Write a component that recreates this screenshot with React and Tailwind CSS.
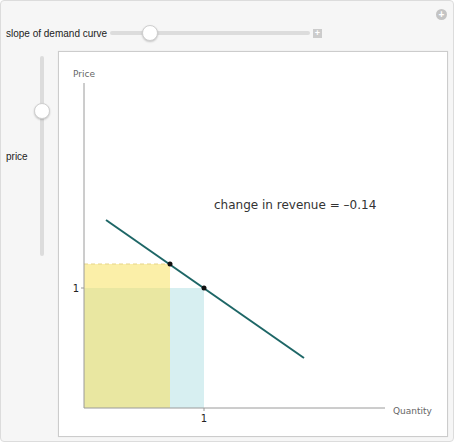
import React from 'react';

// demand-curve revenue demo: two sliders + a plot
const plot = {
  yAxisX: 25,
  axisY: 356,
  oldQ: 145,
  oldP: 236,
  newQ: 111,
  newP: 212,
};

function HSlider() {
  return (
    <div className="relative w-[200px] h-[16px] shrink-0 flex items-center">
      <div className="w-full h-[4px] rounded-full bg-[#dcdcdc]" />
      <div className="absolute left-[32px] top-0 w-[16px] h-[16px] rounded-full bg-white border border-[#cfcfcf] shadow-[0_1px_2px_rgba(0,0,0,0.2)]" />
    </div>
  );
}

function VSlider() {
  return (
    <div className="relative w-[16px] h-[200px] flex justify-center">
      <div className="w-[4px] h-full rounded-full bg-[#dcdcdc]" />
      <div className="absolute top-[47px] left-0 w-[16px] h-[16px] rounded-full bg-white border border-[#cfcfcf] shadow-[0_1px_2px_rgba(0,0,0,0.2)]" />
    </div>
  );
}

function Plot() {
  const { yAxisX, axisY, oldQ, oldP, newQ, newP } = plot;
  return (
    <svg width="388" height="384" viewBox="0 0 388 384" className="block">
      <rect x={yAxisX} y={newP} width={newQ - yAxisX} height={axisY - newP} fill="#fbefa8" />
      <rect x={yAxisX} y={oldP} width={oldQ - yAxisX} height={axisY - oldP} fill="#d7eff1" />
      <rect x={yAxisX} y={oldP} width={newQ - yAxisX} height={axisY - oldP} fill="#e9e7a1" />
      <line x1={yAxisX} y1={newP} x2={newQ} y2={newP} stroke="#e6d58a" strokeWidth="1" strokeDasharray="4 3" />

      <line x1={yAxisX} y1="31" x2={yAxisX} y2={axisY} stroke="#9a9a9a" strokeWidth="1" />
      <line x1={yAxisX} y1={axisY} x2="326" y2={axisY} stroke="#9a9a9a" strokeWidth="1" />
      <line x1={oldQ} y1={axisY} x2={oldQ} y2={axisY + 3} stroke="#9a9a9a" strokeWidth="1" />
      <line x1={yAxisX - 3} y1={oldP} x2={yAxisX} y2={oldP} stroke="#9a9a9a" strokeWidth="1" />

      <line x1="47" y1="168" x2="245" y2="306" stroke="#1d6666" strokeWidth="2" />
      <circle cx={newQ} cy={newP} r="2.5" fill="#111" />
      <circle cx={oldQ} cy={oldP} r="2.5" fill="#111" />

      <g fontFamily="'DejaVu Sans', Verdana, sans-serif" fontSize="9" fill="#666">
        <text x="14" y="25">Price</text>
        <text x="334" y="362">Quantity</text>
      </g>
      <g fontFamily="'DejaVu Sans', Verdana, sans-serif" fontSize="10" fill="#222">
        <text x={oldQ} y="370" textAnchor="middle">1</text>
        <text x="20" y="240" textAnchor="end">1</text>
      </g>
      <text x="155" y="157" fontFamily="'DejaVu Sans', Verdana, sans-serif" fontSize="12" fill="#333">
        change in revenue = –0.14
      </text>
    </svg>
  );
}

export default function App() {
  return (
    <div className="w-[455px] h-[444px] bg-white" style={{ fontFamily: "'Liberation Sans', Arial, sans-serif" }}>
      <div className="relative w-[454px] h-[442px] rounded-[4px] border border-[#dcdcdc] bg-[#f6f6f6] pt-[24px] pl-[5px]">
        {/* top-right plus */}
        <div className="absolute top-[8px] right-[6px] w-[11px] h-[11px] rounded-full bg-[#c4c4c4] flex items-center justify-center text-white text-[10px] font-bold leading-none">
          +
        </div>

        <div className="flex items-center h-[16px]">
          <div className="w-[104px] shrink-0 whitespace-nowrap text-[10px] text-[#222]">slope of demand curve</div>
          <HSlider />
          <div className="ml-[3px] w-[9px] h-[9px] bg-[#cccccc] flex items-center justify-center text-white text-[9px] font-bold leading-none">
            +
          </div>
        </div>

        <div className="flex mt-[10px]">
          <div className="w-[52px] pt-[5px]">
            <div className="flex items-center">
              <div className="w-[28px] text-[10px] text-[#222]">price</div>
              <VSlider />
            </div>
          </div>
          <div className="w-[390px] h-[386px] bg-white border border-[#cccccc] shadow-[0_0_1px_rgba(0,0,0,0.1)]">
            <Plot />
          </div>
        </div>
      </div>
    </div>
  );
}
